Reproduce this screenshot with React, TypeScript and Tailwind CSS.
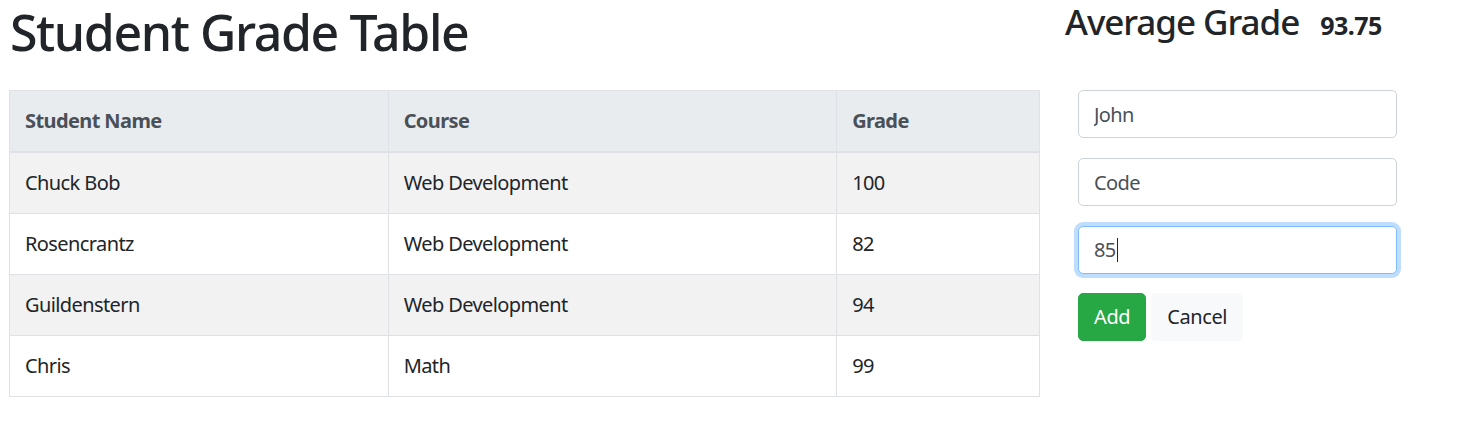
import React from "react";

const rows = [
  { name: "Chuck Bob", course: "Web Development", grade: "100" },
  { name: "Rosencrantz", course: "Web Development", grade: "82" },
  { name: "Guildenstern", course: "Web Development", grade: "94" },
  { name: "Chris", course: "Math", grade: "99" },
];

const font = { fontFamily: '"Noto Sans", "Open Sans", sans-serif', letterSpacing: "-0.03em" };

export default function App() {
  return (
    <div
      className="flex w-[1464px] h-[439px] bg-white text-[#212529]"
      style={{ fontFamily: '"Noto Sans", "Open Sans", sans-serif' }}
    >
      <div className="pl-[9px] w-[1040px] shrink-0">
        <h1 className="text-[50px] leading-[60px] font-medium m-0 pl-[1px] pt-[2px] text-[#212529] tracking-[-0.028em]">
          Student Grade Table
        </h1>
        <table className="mt-[28px] w-[1031px] border-collapse text-[20px] leading-[30px] tracking-[-0.03em]">
          <colgroup>
            <col className="w-[379px]" />
            <col className="w-[449px]" />
            <col className="w-[203px]" />
          </colgroup>
          <thead>
            <tr className="bg-[#e9ecef] text-[#495057]">
              <th className="border border-[#dee2e6] border-b-2 px-[15px] py-[15px] text-left font-bold">Student Name</th>
              <th className="border border-[#dee2e6] border-b-2 px-[15px] py-[15px] text-left font-bold">Course</th>
              <th className="border border-[#dee2e6] border-b-2 px-[15px] py-[15px] text-left font-bold">Grade</th>
            </tr>
          </thead>
          <tbody>
            {rows.map((r, i) => (
              <tr key={i} className={i % 2 === 0 ? "bg-[#f2f2f2]" : "bg-white"}>
                <td className="border border-[#dee2e6] px-[15px] py-[15px]">{r.name}</td>
                <td className="border border-[#dee2e6] px-[15px] py-[15px]">{r.course}</td>
                <td className="border border-[#dee2e6] px-[15px] py-[15px]">{r.grade}</td>
              </tr>
            ))}
          </tbody>
        </table>
      </div>
      <div className="pl-[25px] pr-[20px] flex flex-col">
        <h3 className="m-0 pt-[1px] text-[35px] leading-[42px] font-medium flex items-baseline whitespace-nowrap">
          <span className="tracking-[-0.03em]">Average Grade</span>
          <span className="ml-[21px] text-[25px] font-bold tracking-[-0.02em]">93.75</span>
        </h3>
        <div className="pl-[13px] mt-[44px] flex flex-col w-[332px]">
          <input
            readOnly
            value="John"
            className="w-[319px] h-[48px] border border-[#ced4da] rounded-[5px] px-[15px] text-[20px] text-[#495057] bg-white outline-none"
            style={font}
          />
          <input
            readOnly
            value="Code"
            className="mt-[20px] w-[319px] h-[48px] border border-[#ced4da] rounded-[5px] px-[15px] text-[20px] text-[#495057] bg-white outline-none"
            style={font}
          />
          <div className="mt-[20px] w-[319px] h-[48px] border border-[#80bdff] rounded-[5px] px-[15px] text-[20px] text-[#495057] bg-white flex items-center shadow-[0_0_0_4px_rgba(0,123,255,0.25)] tracking-[-0.03em]">
            <span>85</span>
            <span className="inline-block ml-[1px] w-[1px] h-[24px] bg-[#212529]" />
          </div>
          <div className="mt-[19px] flex gap-[5px] tracking-[-0.025em]">
            <button className="h-[48px] px-[15px] rounded-[5px] bg-[#28a745] text-white text-[20px] border border-[#28a745]">
              Add
            </button>
            <button className="h-[48px] px-[15px] rounded-[5px] bg-[#f8f9fa] text-[#212529] text-[20px] border border-[#f8f9fa]">
              Cancel
            </button>
          </div>
        </div>
      </div>
    </div>
  );
}
